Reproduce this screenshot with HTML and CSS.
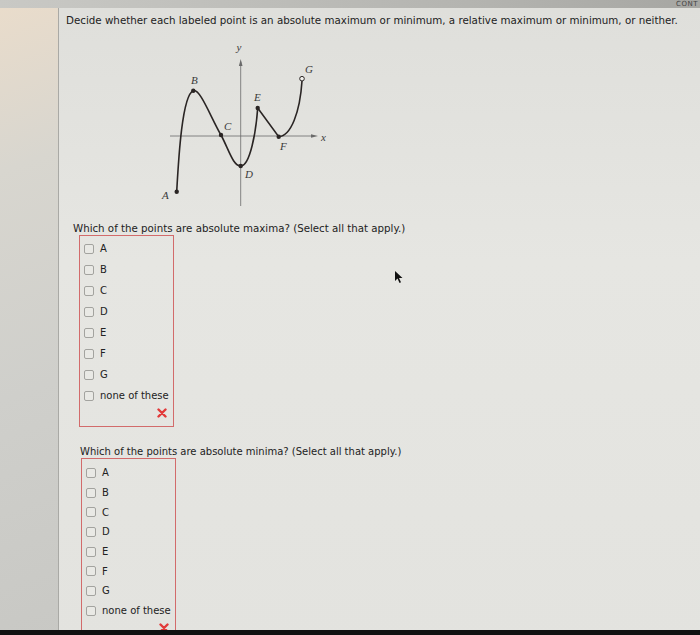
FILE: index.html
```html
<!DOCTYPE html>
<html>
<head>
<meta charset="utf-8">
<link rel="stylesheet" href="styles.css">
</head>
<body>
<div class="page">
  <div class="topbar"><span class="topbar-text">CONT</span></div>
  <div class="screen">
    <div class="margin"></div>
    <div class="content">
      <p class="heading">Decide whether each labeled point is an absolute maximum or minimum, a relative maximum or minimum, or neither.</p>
      <svg class="graph" width="200" height="180" viewBox="150 30 200 180">
        <g stroke="#6a6a6a" stroke-width="0.8" fill="none">
          <line x1="240.7" y1="62" x2="240.7" y2="206"/>
          <line x1="170" y1="136" x2="314" y2="136"/>
        </g>
        <path d="M238.9,66 L240.7,59 L242.5,66 Z" fill="#6a6a6a"/>
        <path d="M311,134.2 L318,136 L311,137.8 Z" fill="#6a6a6a"/>
        <path d="M176.7,191.7 C178.5,160 182,95 193.3,90.7 C200,88 211,118 221,135 C229,150 233,166 240.7,166 C250,166 256,132 257.7,108 L278.7,136.7 C291,136 300,112 302,81" stroke="#2a2524" stroke-width="1.6" fill="none"/>
        <g fill="#2a2524">
          <circle cx="176.7" cy="191.7" r="2.2"/>
          <circle cx="193.3" cy="90.7" r="2.2"/>
          <circle cx="221" cy="135" r="2.2"/>
          <circle cx="240.7" cy="166" r="2.2"/>
          <circle cx="257.7" cy="108" r="2.2"/>
          <circle cx="278.7" cy="136.7" r="2.2"/>
        </g>
        <circle cx="302" cy="78.7" r="2.3" fill="#f2f2ee" stroke="#2a2524" stroke-width="1"/>
        <g class="lbl">
          <text x="236.5" y="51">y</text>
          <text x="191" y="84">B</text>
          <text x="254" y="101">E</text>
          <text x="305" y="73">G</text>
          <text x="224" y="130">C</text>
          <text x="280" y="150">F</text>
          <text x="321" y="141">x</text>
          <text x="245" y="178">D</text>
          <text x="162" y="199">A</text>
        </g>
      </svg>

      <p class="question q1">Which of the points are absolute maxima? (Select all that apply.)</p>
      <div class="choices c1">
        <label class="choice"><span class="box"></span><span class="txt">A</span></label>
        <label class="choice"><span class="box"></span><span class="txt">B</span></label>
        <label class="choice"><span class="box"></span><span class="txt">C</span></label>
        <label class="choice"><span class="box"></span><span class="txt">D</span></label>
        <label class="choice"><span class="box"></span><span class="txt">E</span></label>
        <label class="choice"><span class="box"></span><span class="txt">F</span></label>
        <label class="choice"><span class="box"></span><span class="txt">G</span></label>
        <label class="choice"><span class="box"></span><span class="txt">none of these</span></label>
        <div class="mark"><svg width="10" height="10" viewBox="0 0 10 10"><path d="M1.5,1.5 L8.5,8.5 M8.5,1.5 L1.5,8.5" stroke="#e23a3a" stroke-width="2.4" stroke-linecap="round"/></svg></div>
      </div>

      <p class="question q2">Which of the points are absolute minima? (Select all that apply.)</p>
      <div class="choices c2">
        <label class="choice"><span class="box"></span><span class="txt">A</span></label>
        <label class="choice"><span class="box"></span><span class="txt">B</span></label>
        <label class="choice"><span class="box"></span><span class="txt">C</span></label>
        <label class="choice"><span class="box"></span><span class="txt">D</span></label>
        <label class="choice"><span class="box"></span><span class="txt">E</span></label>
        <label class="choice"><span class="box"></span><span class="txt">F</span></label>
        <label class="choice"><span class="box"></span><span class="txt">G</span></label>
        <label class="choice"><span class="box"></span><span class="txt">none of these</span></label>
        <div class="mark"><svg width="10" height="10" viewBox="0 0 10 10"><path d="M1.5,1.5 L8.5,8.5 M8.5,1.5 L1.5,8.5" stroke="#e23a3a" stroke-width="2.4" stroke-linecap="round"/></svg></div>
      </div>
    </div>
  </div>
  <svg class="cursor" width="10" height="14" viewBox="0 0 10 14"><path d="M1,1 L1,11 L3.5,8.5 L5.5,13 L7,12.3 L5,8 L8.5,8 Z" fill="#111"/></svg>
  <div class="bezel"></div>
</div>
</body>
</html>
```

FILE: styles.css
```css
html, body {
  margin: 0;
  padding: 0;
}
body {
  background: #1a1a1a;
  font-family: "DejaVu Sans", Verdana, sans-serif;
  color: #222;
}
.page {
  position: relative;
  width: 700px;
  height: 635px;
  overflow: hidden;
  background: #e2e2de;
  display: flex;
  flex-direction: column;
}
.topbar {
  height: 8px;
  flex: none;
  background: linear-gradient(to right, #c9c9c5 0%, #b3b3af 70%, #a6a6a2 100%);
  display: flex;
  justify-content: flex-end;
  align-items: center;
  overflow: hidden;
}
.topbar-text {
  font-size: 7px;
  line-height: 8px;
  margin-right: 2px;
  color: #444;
  letter-spacing: 0.5px;
}
.screen {
  flex: 1;
  display: flex;
}
.margin {
  width: 58px;
  flex: none;
  background: linear-gradient(160deg, #e9dccb 0%, #d8d6cf 25%, #cfcfcb 60%, #c8c8c4 100%);
  border-right: 1px solid #a9a9a5;
}
.content {
  flex: 1;
  background: linear-gradient(180deg, #dfdfdb 0%, #e6e6e2 40%, #e3e3df 100%);
}
.heading {
  margin: 5px 0 0 7px;
  font-size: 10.3px;
  line-height: 14px;
  white-space: nowrap;
}
.graph {
  display: block;
  margin: 3px 0 0 91px;
}
.lbl text {
  font-family: "Liberation Serif", "Times New Roman", serif;
  font-style: italic;
  font-size: 11px;
  fill: #3a3a3a;
}
.question {
  margin: 12px 0 0 14px;
  font-size: 10.25px;
  line-height: 13px;
  white-space: nowrap;
}
.q2 {
  margin: 18px 0 0 21px;
  font-size: 10px;
}
.choices {
  width: 93px;
  margin-left: 20px;
  border: 1px solid #d26b6b;
  padding: 2px 0 6px 0;
  display: flex;
  flex-direction: column;
}
.c2 {
  margin-left: 22px;
  padding-top: 4px;
}
.choice {
  height: 21px;
  display: flex;
  align-items: center;
  font-size: 10px;
}
.c2 .choice {
  height: 19.7px;
}
.box {
  width: 8px;
  height: 8px;
  margin-left: 4px;
  margin-right: 6px;
  border: 1px solid #a3a39f;
  border-radius: 2px;
  background: #e9e9e5;
  flex: none;
}
.txt {
  white-space: nowrap;
}
.mark {
  height: 14px;
  display: flex;
  justify-content: flex-end;
  align-items: center;
  padding-right: 6px;
}
.cursor {
  position: absolute;
  left: 394px;
  top: 270px;
}
.bezel {
  position: absolute;
  left: 0;
  right: 0;
  bottom: 0;
  height: 5px;
  background: #111;
}
```
